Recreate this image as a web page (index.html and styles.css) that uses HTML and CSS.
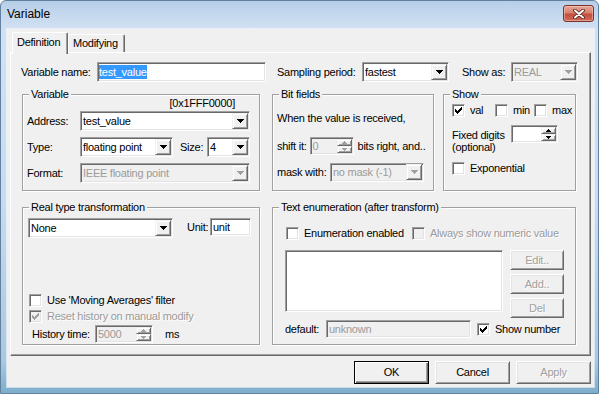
FILE: index.html
```html
<!DOCTYPE html>
<html lang="en">
<head>
  <meta charset="UTF-8">
  <meta name="viewport" content="width=device-width, initial-scale=1.0">
  <title>Variable</title>
  <link rel="stylesheet" href="styles.css">
</head>
<body>
  <svg class="defs" width="0" height="0">
    <symbol id="arrow-down" viewBox="0 0 7 4"><path d="M0 0h7v1h-1v1h-1v1h-1v1h-1v-1h-1v-1h-1v-1h-1z"/></symbol>
    <symbol id="spin-up" viewBox="0 0 5 3"><path d="M2 0h1v1h1v1h1v1h-5v-1h1v-1h1z"/></symbol>
    <symbol id="spin-down" viewBox="0 0 5 3"><path d="M0 0h5v1h-1v1h-1v1h-1v-1h-1v-1h-1v-1h-1z"/></symbol>
    <symbol id="tick" viewBox="0 0 7 7"><path d="M6 0h1v1h-1zM5 1h2v1h-2zM0 2h1v1h-1zM4 2h3v1h-3zM0 3h2v1h-2zM3 3h3v1h-3zM0 4h5v1h-5zM1 5h3v1h-3zM2 6h1v1h-1z"/></symbol>
  </svg>

  <div class="window">
    <div class="titlebar">
      <span class="title">Variable</span>
      <div class="close">
        <svg width="12" height="10" viewBox="0 0 12 10">
          <path d="M2 1.5L10 8.5M10 1.5L2 8.5" stroke="#4a1a14" stroke-width="3.6" stroke-linecap="round"/>
          <path d="M2 1.5L10 8.5M10 1.5L2 8.5" stroke="#fff" stroke-width="2" stroke-linecap="round"/>
        </svg>
      </div>
    </div>

    <div class="client">
      <div class="tabs">
        <div class="tab active">Definition</div>
        <div class="tab">Modifying</div>
      </div>

      <div class="panel">
        <!-- name / sampling / show as -->
        <div class="row name-row">
          <span class="lbl" style="width:76px">Variable name:</span>
          <div class="edit name-edit"><span class="sel">test_value</span></div>
          <span class="lbl sample-lbl">Sampling period:</span>
          <div class="combo sample-combo">
            <span class="text">fastest</span>
            <span class="drop"><svg width="7" height="4"><use href="#arrow-down"/></svg></span>
          </div>
          <span class="lbl showas-lbl">Show as:</span>
          <div class="combo disabled showas-combo">
            <span class="text">REAL</span>
            <span class="drop"><svg width="7" height="4"><use href="#arrow-down"/></svg></span>
          </div>
        </div>

        <div class="group-row top-groups">
          <!-- Variable -->
          <div class="group var-group">
            <span class="gtitle">Variable</span>
            <div class="addr-note">[0x1FFF0000]</div>
            <div class="row var-row first">
              <span class="lbl var-lbl">Address:</span>
              <div class="combo addr-combo">
                <span class="text">test_value</span>
                <span class="drop"><svg width="7" height="4"><use href="#arrow-down"/></svg></span>
              </div>
            </div>
            <div class="row var-row">
              <span class="lbl var-lbl">Type:</span>
              <div class="combo type-combo">
                <span class="text">floating point</span>
                <span class="drop"><svg width="7" height="4"><use href="#arrow-down"/></svg></span>
              </div>
              <span class="lbl size-lbl">Size:</span>
              <div class="combo size-combo">
                <span class="text">4</span>
                <span class="drop"><svg width="7" height="4"><use href="#arrow-down"/></svg></span>
              </div>
            </div>
            <div class="row var-row">
              <span class="lbl var-lbl">Format:</span>
              <div class="combo disabled addr-combo">
                <span class="text">IEEE floating point</span>
                <span class="drop"><svg width="7" height="4"><use href="#arrow-down"/></svg></span>
              </div>
            </div>
          </div>

          <!-- Bit fields -->
          <div class="group bit-group">
            <span class="gtitle">Bit fields</span>
            <div class="row bit-row first">When the value is received,</div>
            <div class="row bit-row shift-row">
              <span class="lbl shift-lbl">shift it:</span>
              <div class="spin disabled shift-spin">
                <span class="text">0</span>
                <span class="spin-btns">
                  <span class="sbtn"><svg width="5" height="3"><use href="#spin-up"/></svg></span>
                  <span class="sbtn"><svg width="5" height="3"><use href="#spin-down"/></svg></span>
                </span>
              </div>
              <span class="lbl bits-lbl">bits right, and..</span>
            </div>
            <div class="row bit-row">
              <span class="lbl mask-lbl">mask with:</span>
              <div class="combo disabled mask-combo">
                <span class="text">no mask (-1)</span>
                <span class="drop"><svg width="7" height="4"><use href="#arrow-down"/></svg></span>
              </div>
            </div>
          </div>

          <!-- Show -->
          <div class="group show-group">
            <span class="gtitle">Show</span>
            <div class="row show-checks">
              <label class="cb cb-val"><span class="check"><svg width="7" height="7"><use href="#tick"/></svg></span>val</label>
              <label class="cb cb-min"><span class="check"></span>min</label>
              <label class="cb"><span class="check"></span>max</label>
            </div>
            <div class="row fixed-row">
              <span class="fixed-lbl">Fixed digits<br>(optional)</span>
              <div class="spin fixed-spin">
                <span class="text"></span>
                <span class="spin-btns">
                  <span class="sbtn"><svg width="5" height="3"><use href="#spin-up"/></svg></span>
                  <span class="sbtn"><svg width="5" height="3"><use href="#spin-down"/></svg></span>
                </span>
              </div>
            </div>
            <div class="row exp-row">
              <label class="cb"><span class="check"></span>Exponential</label>
            </div>
          </div>
        </div>

        <div class="group-row bottom-groups">
          <!-- Real type transformation -->
          <div class="group real-group">
            <span class="gtitle">Real type transformation</span>
            <div class="row real-row">
              <div class="combo none-combo">
                <span class="text">None</span>
                <span class="drop"><svg width="7" height="4"><use href="#arrow-down"/></svg></span>
              </div>
              <span class="lbl unit-lbl">Unit:</span>
              <div class="edit unit-edit">unit</div>
            </div>
            <div class="row filter-row">
              <label class="cb"><span class="check"></span>Use 'Moving Averages' filter</label>
            </div>
            <div class="row reset-row">
              <label class="cb disabled"><span class="check"><svg width="7" height="7"><use href="#tick"/></svg></span>Reset history on manual modify</label>
            </div>
            <div class="row hist-row">
              <span class="lbl hist-lbl">History time:</span>
              <div class="spin disabled hist-spin">
                <span class="text">5000</span>
                <span class="spin-btns">
                  <span class="sbtn"><svg width="5" height="3"><use href="#spin-up"/></svg></span>
                  <span class="sbtn"><svg width="5" height="3"><use href="#spin-down"/></svg></span>
                </span>
              </div>
              <span class="lbl ms-lbl">ms</span>
            </div>
          </div>

          <!-- Text enumeration -->
          <div class="group enum-group">
            <span class="gtitle">Text enumeration (after transform)</span>
            <div class="row enum-checks">
              <label class="cb cb-enum"><span class="check"></span>Enumeration enabled</label>
              <label class="cb disabled"><span class="check"></span>Always show numeric value</label>
            </div>
            <div class="enum-body">
              <div class="listbox"></div>
              <div class="side-btns">
                <button class="btn disabled small">Edit..</button>
                <button class="btn disabled small">Add..</button>
                <button class="btn disabled small">Del</button>
              </div>
            </div>
            <div class="row default-row">
              <span class="lbl default-lbl">default:</span>
              <div class="edit disabled default-edit">unknown</div>
              <label class="cb cb-shownum"><span class="check"><svg width="7" height="7"><use href="#tick"/></svg></span>Show number</label>
            </div>
          </div>
        </div>
      </div>

      <div class="buttons">
        <button class="btn default">OK</button>
        <button class="btn">Cancel</button>
        <button class="btn disabled">Apply</button>
      </div>
    </div>
  </div>
</body>
</html>
```

FILE: styles.css
```css
* {
  box-sizing: border-box;
}
body {
  margin: 0;
  font-family: "Liberation Sans", Arial, sans-serif;
  font-size: 11px;
  line-height: 13px;
  letter-spacing: -0.25px;
  color: #000;
  background: #fff;
}
.defs {
  position: absolute;
}

/* window frame */
.window {
  width: 599px;
  height: 394px;
  display: flex;
  flex-direction: column;
  padding: 0 4px 6px 6px;
  border: 1px solid #62819f;
  border-radius: 6px 6px 0 0;
  background: linear-gradient(#b7cee8, #c5d8ee 14px, #d2e1f2 28px, #c8dbef 200px, #a9c8e0 360px, #7eaecb);
}
.titlebar {
  height: 28px;
  display: flex;
  justify-content: space-between;
  align-items: flex-start;
}
.title {
  font-size: 12px;
  line-height: 15px;
  letter-spacing: 0;
  margin-top: 6px;
}
.close {
  width: 31px;
  height: 17px;
  margin-top: 4px;
  display: flex;
  align-items: center;
  justify-content: center;
  border: 1px solid #7b3328;
  border-radius: 3px;
  background: linear-gradient(#e8a798, #d7806f 45%, #c2503d 55%, #d06a58);
  box-shadow: inset 0 0 0 1px rgba(255, 220, 210, 0.45);
}
.client {
  flex: 1;
  display: flex;
  flex-direction: column;
  padding: 0 3px;
  background: #f0f0f0;
  box-shadow: 0 0 0 1px rgba(255, 255, 255, 0.55);
}

/* tabs */
.tabs {
  height: 23px;
  display: flex;
  align-items: flex-end;
  padding-left: 2px;
}
.tab {
  height: 18px;
  padding: 2px 0 0 4px;
  width: 57px;
  border: 1px solid;
  border-color: #fff #696969 transparent #fff;
  border-bottom: 0;
  border-radius: 2px 2px 0 0;
  box-shadow: inset -1px 0 #a0a0a0;
  background: #f0f0f0;
}
.tab.active {
  position: relative;
  z-index: 1;
  width: 56px;
  height: 22px;
  padding-top: 3px;
  margin-bottom: -2px;
}
.panel {
  height: 304px;
  padding: 9px 0 0 10px;
  border: 1px solid;
  border-color: #fff #696969 #696969 #fff;
  box-shadow: inset -1px -1px #a0a0a0;
}

/* generic controls */
.row {
  display: flex;
  align-items: center;
}
.lbl {
  white-space: nowrap;
  flex: none;
}
.edit, .combo, .spin, .listbox {
  flex: none;
  border: 1px solid;
  border-color: #a0a0a0 #fff #fff #a0a0a0;
  box-shadow: inset 1px 1px #696969, inset -1px -1px #e3e3e3;
  background: #fff;
  white-space: nowrap;
  overflow: hidden;
}
.edit {
  height: 18px;
  padding: 1px 2px;
  line-height: 14px;
}
.combo {
  height: 20px;
  padding: 1px;
  display: flex;
  align-items: center;
}
.combo .text, .spin .text {
  flex: 1;
  padding-left: 1px;
  overflow: hidden;
}
.drop, .sbtn {
  flex: none;
  display: flex;
  align-items: center;
  justify-content: center;
  border: 1px solid;
  border-color: #f0f0f0 #696969 #696969 #f0f0f0;
  box-shadow: inset 1px 1px #fff, inset -1px -1px #a0a0a0;
  background: #f0f0f0;
  fill: #000;
}
.drop {
  width: 16px;
  height: 16px;
}
.spin {
  height: 18px;
  padding: 1px;
  display: flex;
  align-items: center;
}
.spin-btns {
  display: flex;
  flex-direction: column;
}
.sbtn {
  width: 15px;
  height: 7px;
}
.disabled {
  color: #9b9b9b;
}
.edit.disabled, .combo.disabled, .spin.disabled {
  background: #f0f0f0;
}
.disabled .drop, .disabled .sbtn {
  fill: #a0a0a0;
}
.sel {
  display: inline-block;
  height: 14px;
  background: #3399ff;
  color: #fff;
}

/* checkboxes */
.cb {
  display: flex;
  align-items: center;
  white-space: nowrap;
}
.check {
  width: 13px;
  height: 13px;
  margin-right: 5px;
  display: flex;
  align-items: center;
  justify-content: center;
  border: 1px solid;
  border-color: #a0a0a0 #fff #fff #a0a0a0;
  box-shadow: inset 1px 1px #696969, inset -1px -1px #e3e3e3;
  background: #fff;
  fill: #000;
}
.cb.disabled {
  text-shadow: 1px 1px #fff;
}
.cb.disabled .check {
  background: #f0f0f0;
  fill: #a0a0a0;
}

/* buttons */
.btn {
  width: 75px;
  height: 23px;
  padding: 0;
  font: inherit;
  letter-spacing: inherit;
  color: #000;
  border: 1px solid;
  border-color: #fff #696969 #696969 #fff;
  box-shadow: inset 1px 1px #e3e3e3, inset -1px -1px #a0a0a0;
  background: #f0f0f0;
}
.btn.default {
  border-color: #000;
  box-shadow: inset 1px 1px #fff, inset -1px -1px #696969, inset -2px -2px #a0a0a0;
}
.btn.disabled {
  color: #a0a0a0;
  text-shadow: 1px 1px #fff;
}
.btn.small {
  width: 54px;
  height: 20px;
}
.buttons {
  display: flex;
  justify-content: flex-end;
  gap: 6px;
  margin-top: 5px;
}

/* group boxes */
.group-row {
  display: flex;
  margin-left: 1px;
}
.top-groups {
  margin-top: 12px;
}
.bottom-groups {
  margin-top: 16px;
}
.group {
  position: relative;
  flex: none;
  border: 1px solid #a0a0a0;
  box-shadow: inset 1px 1px #fff, 1px 1px #fff;
}
.gtitle {
  position: absolute;
  top: -7px;
  left: 6px;
  padding: 0 2px;
  background: #f0f0f0;
  white-space: nowrap;
}
.top-groups .group {
  height: 97px;
}
.bottom-groups .group {
  height: 138px;
}

/* top row */
.name-row {
  height: 20px;
}
.name-edit {
  width: 169px;
  height: 20px;
  padding: 2px 1px;
}
.sample-lbl {
  width: 85px;
  margin-left: 11px;
}
.sample-combo {
  width: 87px;
}
.showas-lbl {
  width: 49px;
  margin-left: 13px;
}
.showas-combo {
  width: 67px;
}

/* Variable group */
.var-group {
  width: 238px;
}
.addr-note {
  height: 13px;
  margin-top: 2px;
  padding-right: 24px;
  text-align: right;
}
.var-row {
  height: 20px;
  margin-top: 6px;
  padding-left: 4px;
}
.var-row.first {
  margin-top: 1px;
}
.var-lbl {
  width: 53px;
}
.addr-combo {
  width: 170px;
}
.type-combo {
  width: 93px;
}
.size-lbl {
  width: 27px;
  margin-left: 7px;
}
.size-combo {
  width: 43px;
}

/* Bit fields group */
.bit-group {
  width: 162px;
  margin-left: 12px;
}
.bit-row {
  height: 20px;
  margin-top: 6px;
  padding-left: 4px;
  white-space: nowrap;
}
.bit-row.first {
  margin-top: 13px;
}
.shift-row {
  margin-top: 8px;
}
.shift-lbl {
  margin-right: 3px;
}
.shift-spin {
  width: 44px;
}
.bits-lbl {
  margin-left: 4px;
}
.mask-lbl {
  width: 53px;
}
.mask-combo {
  width: 94px;
  height: 19px;
}

/* Show group */
.show-group {
  width: 133px;
  margin-left: 9px;
}
.show-checks {
  height: 13px;
  margin-top: 9px;
  padding-left: 8px;
}
.cb-val {
  width: 43px;
}
.cb-min {
  width: 39px;
}
.fixed-row {
  align-items: flex-start;
  margin-top: 8px;
  padding-left: 8px;
  height: 28px;
}
.fixed-lbl {
  width: 59px;
  margin-top: 4px;
  line-height: 12px;
}
.fixed-spin {
  width: 47px;
}
.exp-row {
  margin-top: 9px;
  padding-left: 8px;
}

/* Real type group */
.real-group {
  width: 238px;
}
.real-row {
  align-items: flex-start;
  margin-top: 10px;
  padding-left: 5px;
}
.none-combo {
  width: 145px;
}
.unit-lbl {
  width: 23px;
  margin-left: 14px;
  line-height: 18px;
}
.unit-edit {
  width: 41px;
}
.filter-row {
  margin-top: 56px;
  padding-left: 6px;
}
.reset-row {
  margin-top: 3px;
  padding-left: 6px;
}
.hist-row {
  margin-top: 2px;
  padding-left: 9px;
}
.hist-lbl {
  width: 63px;
}
.hist-spin {
  width: 58px;
}
.ms-lbl {
  margin-left: 12px;
}

/* Text enumeration group */
.enum-group {
  width: 304px;
  margin-left: 12px;
}
.enum-checks {
  margin-top: 19px;
  padding-left: 13px;
}
.cb-enum {
  width: 126px;
}
.enum-body {
  display: flex;
  margin-top: 10px;
  padding-left: 12px;
}
.listbox {
  width: 218px;
  height: 62px;
}
.side-btns {
  display: flex;
  flex-direction: column;
  gap: 4px;
  margin-left: 7px;
}
.default-row {
  height: 18px;
  margin-top: 2px;
  padding-left: 12px;
}
.default-lbl {
  width: 41px;
}
.default-edit {
  width: 145px;
}
.cb-shownum {
  margin-left: 6px;
}
```
